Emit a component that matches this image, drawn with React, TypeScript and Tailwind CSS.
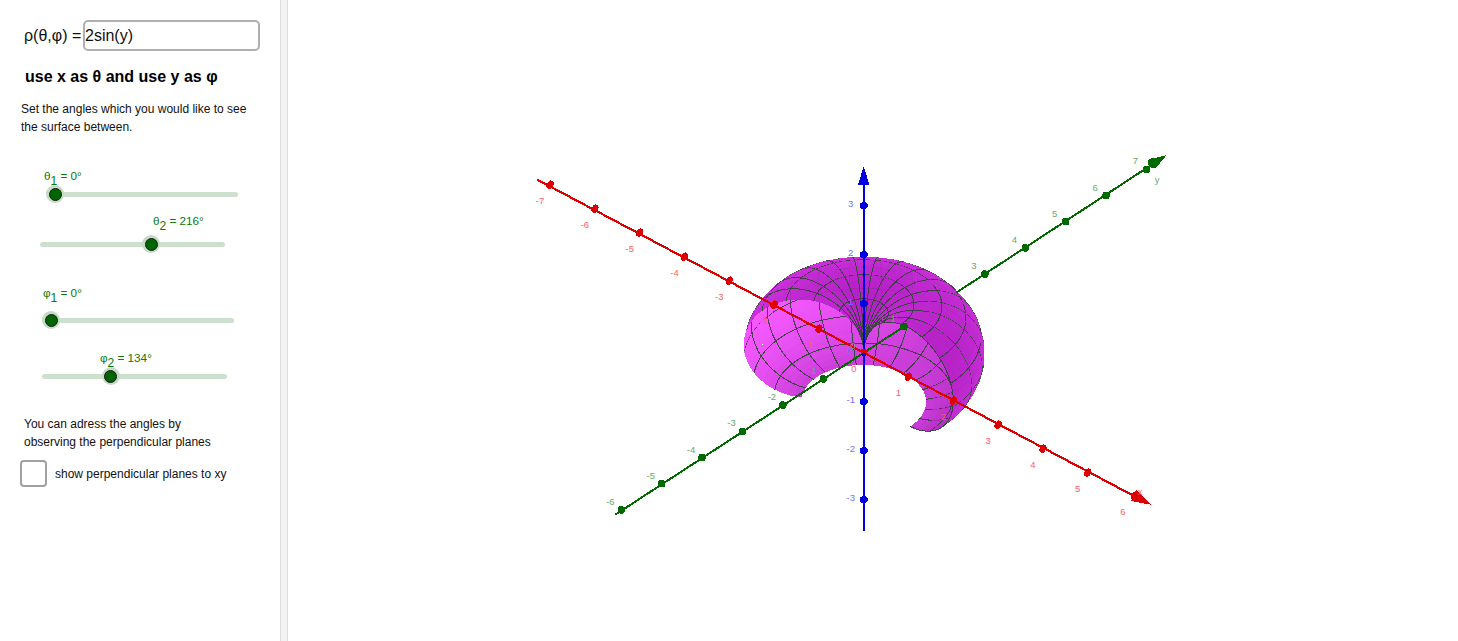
import { ReactNode } from "react"

// view of the 3D scene, read off the axis ticks
const ORIGIN = [863.7, 352.7]
const project = (x: number, y: number, z: number): [number, number] => [
  ORIGIN[0] + 44.8 * x + 40.4 * y,
  ORIGIN[1] + 24 * x - 26.2 * y - 49 * z,
]
const VIEW = [0.5427, -0.602, 0.587]
const INNER_LIGHT = [-0.9, -0.1, 0.1]

const THETA_MAX = (216 * Math.PI) / 180
const PHI_MAX = (134 * Math.PI) / 180
const THETA_CELLS = 14
const PHI_CELLS = 10
const SUB = 4

const surfacePoint = (t: number, p: number) => {
  const rho = 2 * Math.sin(p)
  return [rho * Math.sin(p) * Math.cos(t), rho * Math.sin(p) * Math.sin(t), rho * Math.cos(p)]
}

const dot = (a: number[], b: number[]) => a[0] * b[0] + a[1] * b[1] + a[2] * b[2]

const toPath = (pts: number[][]) =>
  pts
    .map((q, i) => {
      const [sx, sy] = project(q[0], q[1], q[2])
      return `${i ? "L" : "M"}${sx.toFixed(1)} ${sy.toFixed(1)}`
    })
    .join("")

function buildMesh() {
  const items: { depth: number; fill?: string; d: string }[] = []
  const nt = THETA_CELLS * SUB
  const np = PHI_CELLS * SUB
  for (let i = 0; i < nt; i++) {
    for (let j = 0; j < np; j++) {
      const t0 = (THETA_MAX * i) / nt
      const t1 = (THETA_MAX * (i + 1)) / nt
      const p0 = (PHI_MAX * j) / np
      const p1 = (PHI_MAX * (j + 1)) / np
      const a = surfacePoint(t0, p0)
      const b = surfacePoint(t1, p0)
      const c = surfacePoint(t1, p1)
      const e = surfacePoint(t0, p1)
      const depth = (dot(a, VIEW) + dot(b, VIEW) + dot(c, VIEW) + dot(e, VIEW)) / 4
      // outward normal of the tube: outside is dark, the inside catches the light
      const tm = (t0 + t1) / 2
      const pm = (p0 + p1) / 2
      const out = -Math.cos(2 * pm)
      const n = [out * Math.cos(tm), out * Math.sin(tm), Math.sin(2 * pm)]
      const facing = dot(n, VIEW)
      const k = facing > 0 ? 0.15 + 0.4 * (1 - facing) : 0.5 + 0.55 * dot(n, INNER_LIGHT)
      const fill = `rgb(${Math.round(160 + 85 * k)},${Math.round(20 + 55 * k)},${Math.round(180 + 75 * k)})`
      items.push({ depth, fill, d: toPath([a, b, c, e]) + "Z" })
      // lines sort a little in front so the next cells do not wash them out
      if (j % SUB === 0) items.push({ depth: depth + 0.06, d: toPath([a, b]) })
      if (i % SUB === 0) items.push({ depth: depth + 0.06, d: toPath([a, e]) })
    }
  }
  return items.sort((m, n) => m.depth - n.depth)
}

const mesh = buildMesh()

const RED = "#dd0000"
const GREEN = "#006a00"
const BLUE = "#0000e0"

const xTicks = [-7, -6, -5, -4, -3, -2, -1, 1, 2, 3, 4, 5]
const yTicks = [-6, -5, -4, -3, -2, -1, 1, 3, 4, 5, 6, 7]
const zTicks = [-3, -2, -1, 1, 2, 3]

function Graph() {
  const hiddenA = project(0, 1, 0)
  const hiddenB = project(0, 2.3, 0)
  const hiddenTick = project(0, 2, 0)
  return (
    <svg viewBox="288 0 1170 641" className="block h-full w-full font-['Liberation_Sans',sans-serif]">
      {/* part of the y axis behind the surface */}
      <line x1={hiddenA[0]} y1={hiddenA[1]} x2={hiddenB[0]} y2={hiddenB[1]} stroke={GREEN} strokeWidth={2} />
      <circle cx={hiddenTick[0]} cy={hiddenTick[1]} r={3.6} fill="#111" />

      <g shapeRendering="crispEdges">
        {mesh.map((m, i) =>
          m.fill ? (
            <path key={i} d={m.d} fill={m.fill} fillOpacity={0.92} />
          ) : (
            <path key={i} d={m.d} fill="none" stroke="#33443a" strokeOpacity={0.9} strokeWidth={1} />
          ),
        )}
      </g>

      <g shapeRendering="crispEdges">
        {/* y axis */}
        <g stroke={GREEN} strokeWidth={2}>
          <line x1={615.5} y1={514.5} x2={hiddenA[0]} y2={hiddenA[1]} />
          <line x1={hiddenB[0]} y1={hiddenB[1]} x2={1152} y2={164.5} />
        </g>
        <polygon points="1166.7,155 1155,169 1148,160" fill={GREEN} />
        <circle cx={1153} cy={163} r={5} fill={GREEN} />
        {yTicks.map((t) => {
          const [cx, cy] = project(0, t, 0)
          return <circle key={t} cx={cx} cy={cy} r={3.8} fill={GREEN} />
        })}

        {/* x axis */}
        <line x1={537} y1={179.5} x2={1134} y2={496} stroke={RED} strokeWidth={2.2} />
        <polygon points="1150.7,504.7 1131,501 1136,490" fill={RED} />
        <circle cx={1136} cy={496.5} r={5} fill={RED} />
        {xTicks.map((t) => {
          const [cx, cy] = project(t, 0, 0)
          return <ellipse key={t} cx={cx} cy={cy} rx={3.2} ry={4.4} transform={`rotate(28 ${cx} ${cy})`} fill={RED} />
        })}

        {/* z axis */}
        <line x1={863.7} y1={530.7} x2={863.7} y2={184} stroke={BLUE} strokeWidth={2.4} />
        <polygon points="863.7,166 869.5,185 858,185" fill={BLUE} />
        {zTicks.map((t) => {
          const [cx, cy] = project(0, 0, t)
          return <ellipse key={t} cx={cx} cy={cy} rx={4.2} ry={3.4} fill={BLUE} />
        })}
        <circle cx={863.7} cy={351.5} r={3} fill={RED} />
        <circle cx={863.7} cy={354.5} r={2.2} fill={BLUE} />
      </g>

      {/* tick labels */}
      <g fontSize={9.5} textAnchor="middle" dominantBaseline="central" fill="#ff5f5f">
        {xTicks.map((t) => {
          const [cx, cy] = project(t, 0, 0)
          return (
            <text key={t} x={cx - 10} y={cy + 16}>
              {t}
            </text>
          )
        })}
        <text x={854} y={368}>0</text>
        <text x={1123} y={511}>6</text>
        <text x={1140} y={491}>x</text>
      </g>
      <g fontSize={9.5} textAnchor="middle" dominantBaseline="central" fill="#6aa66a">
        {yTicks.map((t) => {
          const [cx, cy] = project(0, t, 0)
          return (
            <text key={t} x={cx - 11} y={cy - 8.5}>
              {t}
            </text>
          )
        })}
        <text x={853} y={345}>0</text>
        <text x={1157} y={179}>y</text>
      </g>
      <g fontSize={9.5} textAnchor="middle" dominantBaseline="central" fill="#7070ff">
        {zTicks.map((t) => {
          const [cx, cy] = project(0, 0, t)
          return (
            <text key={t} x={cx - 13} y={cy - 2}>
              {t}
            </text>
          )
        })}
        <text x={850} y={350}>0</text>
      </g>
    </svg>
  )
}

interface SliderProps {
  symbol: string
  index: number
  value: number
  labelClass: string
  trackClass: string
}

function Slider({ symbol, index, value, labelClass, trackClass }: SliderProps) {
  return (
    <div>
      <div className={`h-4 text-[11.7px] leading-[17px] text-[#0a7a0a] ${labelClass}`}>
        {symbol}
        <span className="align-[-5px] text-[12px] leading-none">{index}</span> = {value}°
      </div>
      <div className={`relative flex h-[18px] w-[185px] items-center ${trackClass}`}>
        <div className="h-[5px] w-full rounded-full bg-[#cde0cd]" />
        <div
          className="absolute top-0 flex h-[18px] w-[18px] -translate-x-1/2 items-center justify-center rounded-full bg-[#c4dbc4]"
          style={{ left: `${(value / 360) * 100}%` }}
        >
          <div className="h-[13px] w-[13px] rounded-full border border-[#1a1a1a] bg-[#006400]" />
        </div>
      </div>
    </div>
  )
}

function Note({ className, children }: { className: string; children: ReactNode }) {
  return <p className={`text-[12px] leading-[18px] text-[#111] ${className}`}>{children}</p>
}

export default function App() {
  return (
    <div className="flex h-[641px] w-[1458px] overflow-hidden bg-white font-['Liberation_Sans',sans-serif]">
      <aside className="w-[280px] shrink-0">
        <div className="mt-5 flex h-[30px] items-start pl-6 text-[16px] leading-[32px] text-[#111]">
          <span className="w-[59px] shrink-0">ρ(θ,φ) =</span>
          <div className="h-[31px] w-[177px] rounded-[5px] border-2 border-[#b0b0b0] leading-[27px]">2sin(y)</div>
        </div>
        <h2 className="mt-[17px] h-5 pl-[25px] text-[16px] leading-5 font-bold text-black">use x as θ and use y as φ</h2>
        <Note className="mt-[13px] pl-[21px]">
          Set the angles which you would like to see
          <br />
          the surface between.
        </Note>

        <div className="mt-[31px]">
          <Slider symbol="θ" index={1} value={0} labelClass="pl-[44px]" trackClass="mt-0.5 ml-[55px] !w-[183px]" />
        </div>
        <div className="mt-[9px]">
          <Slider symbol="θ" index={2} value={216} labelClass="pl-[153px]" trackClass="mt-[7px] ml-10" />
        </div>
        <div className="mt-[31px]">
          <Slider symbol="φ" index={1} value={0} labelClass="pl-[43px]" trackClass="mt-[11px] ml-[51px] !w-[183px]" />
        </div>
        <div className="mt-5">
          <Slider symbol="φ" index={2} value={134} labelClass="pl-[100px]" trackClass="mt-0.5 ml-[42px]" />
        </div>

        <Note className="mt-[30px] pl-6">
          You can adress the angles by
          <br />
          observing the perpendicular planes
        </Note>
        <label className="mt-[9px] ml-5 flex items-center gap-2 text-[12px] text-[#111]">
          <span className="h-[27px] w-[27px] rounded-[4px] border-2 border-[#a0a0a0] bg-white" />
          show perpendicular planes to xy
        </label>
      </aside>
      <div className="w-2 shrink-0 border-x border-[#dcdcdc] bg-[#f3f3f3]" />
      <main className="min-w-0 flex-1">
        <Graph />
      </main>
    </div>
  )
}
